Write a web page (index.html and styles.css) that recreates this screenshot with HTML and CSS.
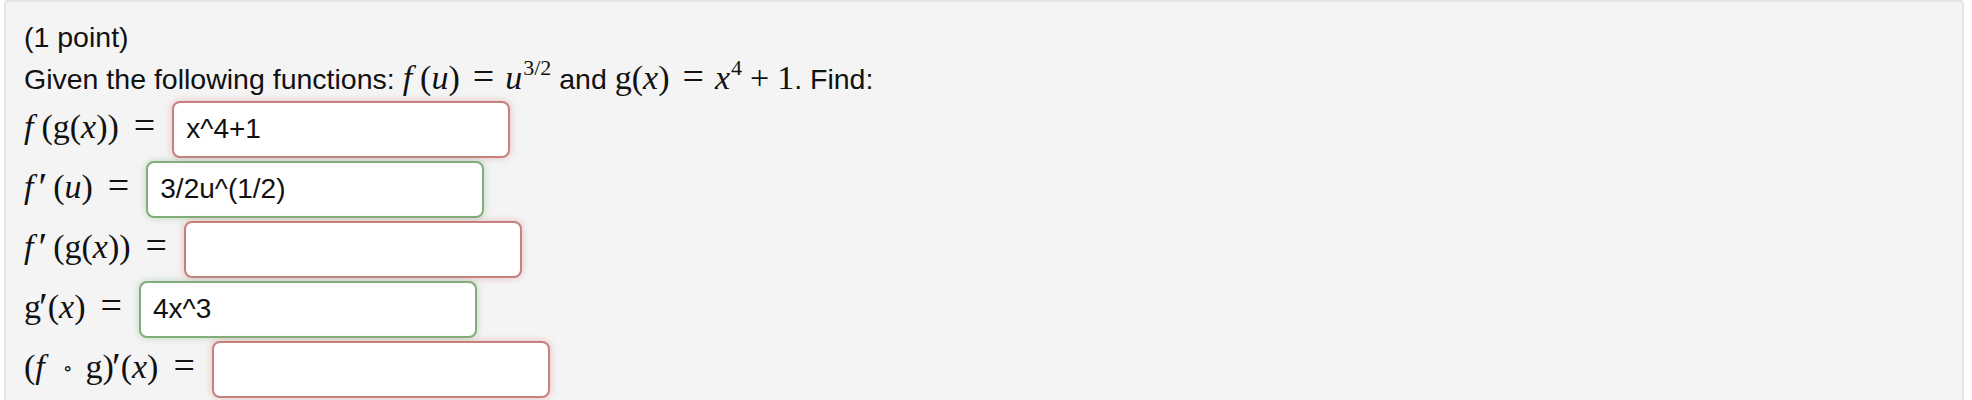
FILE: index.html
```html
<!DOCTYPE html>
<html>
<head>
<meta charset="utf-8">
<link rel="stylesheet" href="styles.css">
</head>
<body>
<div class="well">
  <div class="line">(1 point)</div>
  <div class="line">Given the following functions: <span class="m"><i class="v f">f</i>(<i class="v">u</i>)<span class="rel">=</span><i class="v">u</i><sup class="sup">3/2</sup></span> and <span class="m">g(<i class="v">x</i>)<span class="rel">=</span><i class="v">x</i><sup class="sup">4</sup><span class="bin">+</span>1</span>. Find:</div>

  <div class="row">
    <span class="m lbl"><i class="v f">f</i>(g(<i class="v">x</i>))<span class="rel">=</span></span>
    <input class="ans bad" type="text" value="x^4+1" readonly>
  </div>
  <div class="row">
    <span class="m lbl"><i class="v f">f</i><span class="pr">′</span>(<i class="v">u</i>)<span class="rel">=</span></span>
    <input class="ans good" type="text" value="3/2u^(1/2)" readonly>
  </div>
  <div class="row">
    <span class="m lbl"><i class="v f">f</i><span class="pr">′</span>(g(<i class="v">x</i>))<span class="rel">=</span></span>
    <input class="ans bad" type="text" value="" readonly>
  </div>
  <div class="row">
    <span class="m lbl">g<span class="pr pg">′</span>(<i class="v">x</i>)<span class="rel">=</span></span>
    <input class="ans good" type="text" value="4x^3" readonly>
  </div>
  <div class="row">
    <span class="m lbl">(<i class="v f">f</i><span class="bin comp">∘</span>g)<span class="pr pg">′</span>(<i class="v">x</i>)<span class="rel">=</span></span>
    <input class="ans bad" type="text" value="" readonly>
  </div>
</div>
</body>
</html>
```
FILE: styles.css
```css
html, body {
  margin: 0;
  padding: 0;
  background: #ffffff;
  overflow: hidden;
}

body {
  font-family: "Liberation Sans", Arial, Helvetica, sans-serif;
  font-size: 28.5px;
  color: #111111;
}

.well {
  margin: 0 8px 0 4px;
  height: 440px;
  box-sizing: border-box;
  background: #f4f4f4;
  border: 2px solid #e4e4e4;
  border-bottom: none;
  border-radius: 4px 4px 0 0;
  padding: 15px 18px 0 18px;
}

.line {
  line-height: 40px;
  height: 40px;
  white-space: nowrap;
}

.m {
  font-family: "Liberation Serif", "Times New Roman", "DejaVu Serif", serif;
  font-size: 34px;
  white-space: nowrap;
}

.v {
  font-style: italic;
}

.f {
  margin-right: 8px;
}

.rel {
  font-size: 38px;
  line-height: 1;
  margin: 0 11px 0 13px;
}

.bin {
  margin: 0 8px;
}

.comp {
  font-size: 20px;
  margin: 0 13px 0 10px;
  position: relative;
  top: -3px;
}

.sup {
  font-size: 22px;
  vertical-align: 0;
  position: relative;
  top: -14px;
  margin-left: 1px;
}

.pr {
  font-family: "Liberation Serif", "DejaVu Serif", serif;
  font-size: 40px;
  line-height: 1;
  margin-left: -3px;
  margin-right: 6px;
  position: relative;
  top: 2px;
}

.pr.pg {
  margin-left: -2px;
  margin-right: 0;
}

.row {
  display: flex;
  align-items: baseline;
  height: 60px;
}

.row .lbl {
  line-height: 60px;
}

.lbl .rel {
  margin-left: 15px;
  margin-right: 17px;
}

.ans {
  box-sizing: border-box;
  width: 338px;
  height: 57px;
  margin: 0;
  padding: 0 12px;
  font-family: "Liberation Sans", Arial, Helvetica, sans-serif;
  font-size: 28px;
  color: #111111;
  background: #ffffff;
  border: 2px solid #c8807e;
  border-radius: 8px;
  outline: none;
}

.ans.bad {
  border-color: #c8807e;
  box-shadow: 0 0 6px 1px rgba(205, 120, 118, 0.35);
}

.ans.good {
  border-color: #7fae7a;
  box-shadow: 0 0 6px 1px rgba(120, 175, 115, 0.35);
}
```
